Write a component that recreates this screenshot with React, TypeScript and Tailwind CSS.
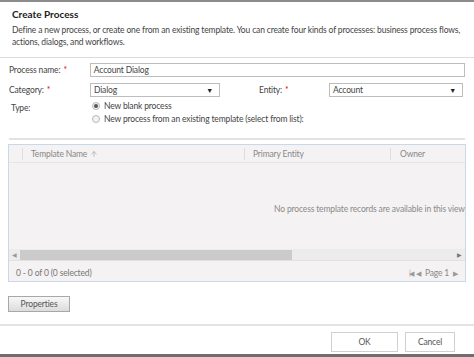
import { ArrowUp } from 'lucide-react'

function Req() {
  return <span className="text-[#e00] ml-[3px]">*</span>
}

function Select({ value, width }: { value: string; width: string }) {
  return (
    <div className={`${width} h-[14px] border border-[#bdbdbd] bg-white flex items-center justify-between pl-[3px] pr-[6px]`}>
      <span>{value}</span>
      <span className="text-[7px] text-[#222]">▼</span>
    </div>
  )
}

function Radio({ checked }: { checked?: boolean }) {
  return (
    <span className="w-[8px] h-[8px] rounded-full border border-[#b8b8b8] bg-[#f2f2f2] flex items-center justify-center">
      {checked && <span className="w-[4px] h-[4px] rounded-full bg-[#555]" />}
    </span>
  )
}

export default function App() {
  return (
    <div
      className="w-[474px] h-[357px] bg-white flex flex-col overflow-hidden text-[#444] text-[8.5px] tracking-[-0.15px] leading-[12px]"
      style={{ fontFamily: 'Lato, "Open Sans", sans-serif' }}
    >
      <div className="h-[2px] bg-[#8c8c8c]" />

      <div className="px-[12px] pt-[5px] h-[55px]">
        <div className="font-bold text-[10px] tracking-normal text-[#222] leading-[14px]">Create Process</div>
        <p className="mt-[3px] leading-[12px]">
          Define a new process, or create one from an existing template. You can create four kinds of processes: business process flows,
          actions, dialogs, and workflows.
        </p>
      </div>
      <div className="h-[1px] bg-[#dcdcdc]" />

      <div className="px-[9px] pt-[5px]">
        <div className="flex items-center h-[14px]">
          <span className="w-[81px]">
            Process name:<Req />
          </span>
          <div className="w-[376px] h-[14px] border border-[#bdbdbd] bg-white flex items-center pl-[3px]">Account Dialog</div>
        </div>

        <div className="flex items-center h-[14px] mt-[6px]">
          <span className="w-[81px]">
            Category:<Req />
          </span>
          <Select value="Dialog" width="w-[130px]" />
          <span className="ml-[39px] w-[70px]">
            Entity:<Req />
          </span>
          <Select value="Account" width="w-[134px]" />
        </div>

        <div className="flex mt-[3px]">
          <span className="w-[83px] pl-[2px] pt-[2px]">Type:</span>
          <div className="flex flex-col">
            <div className="flex items-center gap-[4px] h-[12px]">
              <Radio checked />
              <span>New blank process</span>
            </div>
            <div className="flex items-center gap-[4px] h-[12px] mt-[1px]">
              <Radio />
              <span>New process from an existing template (select from list):</span>
            </div>
          </div>
        </div>
      </div>

      <div className="mx-[9px] mt-[13px] h-[2px] bg-[#e2e2e2]" />

      <div className="ml-[8px] w-[458px] mt-[4px] h-[138px] border border-[#c9d8ea] bg-[#f4f2f3] flex flex-col text-[#888]">
        <div className="h-[18px] flex items-center border-b border-[#e6e4e5]">
          <div className="w-[14px] h-[12px] border-r border-[#dedcdd]" />
          <div className="w-[222px] h-[12px] border-r border-[#dedcdd] pl-[8px] flex items-center gap-[3px]">
            Template Name
            <ArrowUp size={8} strokeWidth={1.5} />
          </div>
          <div className="w-[146px] h-[12px] border-r border-[#dedcdd] pl-[8px] flex items-center">Primary Entity</div>
          <div className="pl-[9px] flex items-center">Owner</div>
        </div>

        <div className="flex-1 relative overflow-hidden">
          <span className="absolute left-[265px] top-[40px] whitespace-nowrap text-[#8a8a8a]">
            No process template records are available in this view
          </span>
        </div>

        <div className="h-[12px] flex items-center bg-[#ececec] border-b border-[#e2e0e1]">
          <span className="w-[11px] text-[6px] text-[#999] text-center">◀</span>
          <div className="w-[272px] h-[10px] bg-[#cbcbcb]" />
          <div className="flex-1" />
          <span className="w-[11px] text-[6px] text-[#777] text-center">▶</span>
        </div>

        <div className="h-[20px] flex items-start pt-[6px] justify-between px-[7px] text-[#777]">
          <span>0 - 0 of 0 (0 selected)</span>
          <span className="flex items-center gap-[4px] text-[#999]">
            <span className="text-[7px] tracking-[-2px]">|◀</span>
            <span className="text-[7px]">◀</span>
            <span className="text-[#888]">Page 1</span>
            <span className="text-[7px]">▶</span>
          </span>
        </div>
      </div>

      <div className="ml-[8px] mt-[14px] w-[62px] h-[16px] border border-[#a8a8a8] bg-gradient-to-b from-[#f8f8f8] to-[#dcdcdc] flex items-center justify-center text-[#555]">
        Properties
      </div>

      <div className="mt-[12px] h-[2px] bg-[#e4e4e4]" />

      <div className="flex-1 flex justify-end items-end pb-[2px] gap-[7px] pr-[19px]">
        <div className="w-[67px] h-[20px] border border-[#d0d0d0] bg-white flex items-center justify-center text-[#555]">OK</div>
        <div className="w-[50px] h-[20px] border border-[#d0d0d0] bg-white flex items-center justify-center text-[#555]">Cancel</div>
      </div>

      <div className="h-[3px] bg-[#6f6f6f]" />
    </div>
  )
}
